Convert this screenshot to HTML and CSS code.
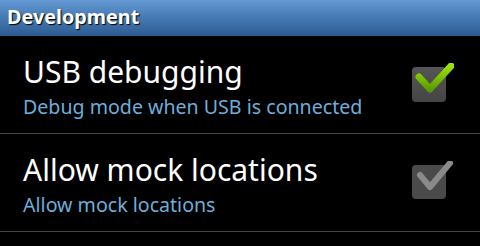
FILE: index.html
```html
<!DOCTYPE html>
<html>
<head>
<meta charset="utf-8">
<link rel="stylesheet" href="styles.css">
</head>
<body>
<div class="screen">
  <div class="header">Development</div>
  <div class="row">
    <div class="text">
      <div class="title">USB debugging</div>
      <div class="summary">Debug mode when USB is connected</div>
    </div>
    <svg class="check" viewBox="0 0 44 44" width="44" height="44">
      <defs>
        <linearGradient id="box1" x1="0" y1="0" x2="0" y2="1">
          <stop offset="0" stop-color="#555555"/>
          <stop offset="1" stop-color="#454545"/>
        </linearGradient>
        <linearGradient id="grn" x1="0" y1="0" x2="0" y2="1">
          <stop offset="0" stop-color="#9be20a"/>
          <stop offset="1" stop-color="#5c9c00"/>
        </linearGradient>
      </defs>
      <rect x="2" y="4" width="34" height="35" rx="4" fill="url(#box1)"/>
      <polyline points="9,14 20,26 41,3" fill="none" stroke="url(#grn)" stroke-width="7" stroke-linecap="round" stroke-linejoin="round"/>
    </svg>
  </div>
  <div class="row">
    <div class="text">
      <div class="title">Allow mock locations</div>
      <div class="summary">Allow mock locations</div>
    </div>
    <svg class="check" viewBox="0 0 44 44" width="44" height="44">
      <rect x="2" y="4" width="34" height="34" rx="4" fill="#4a4a4a"/>
      <polyline points="10,14 20,26 40,2" fill="none" stroke="#8a8a8a" stroke-width="6" stroke-linecap="round" stroke-linejoin="round"/>
    </svg>
  </div>
</div>
</body>
</html>
```

FILE: styles.css
```css
html, body {
  margin: 0;
  padding: 0;
  background: #000;
}
.screen {
  width: 480px;
  height: 246px;
  overflow: hidden;
  background: #000;
  font-family: "Noto Sans", "Open Sans", sans-serif;
}
.header {
  height: 36px;
  box-sizing: border-box;
  padding-left: 7px;
  line-height: 34px;
  font-size: 19.8px;
  font-weight: bold;
  color: #fff;
  text-shadow: 1px 1px 1px #000;
  background: linear-gradient(#6499d3, #4a7fba 40%, #2d5b90);
}
.row {
  display: flex;
  align-items: center;
  height: 98px;
  box-sizing: border-box;
  border-bottom: 1px solid #444;
  padding: 4px 26px 0 23px;
}
.text {
  flex: 1;
  display: flex;
  flex-direction: column;
}
.title {
  font-size: 30px;
  line-height: 36px;
  color: #fff;
}
.summary {
  font-size: 19.6px;
  line-height: 26px;
  margin-top: 4px;
  color: #6eaedb;
}
.check {
  display: block;
  flex: none;
  margin-top: -4px;
}
```
